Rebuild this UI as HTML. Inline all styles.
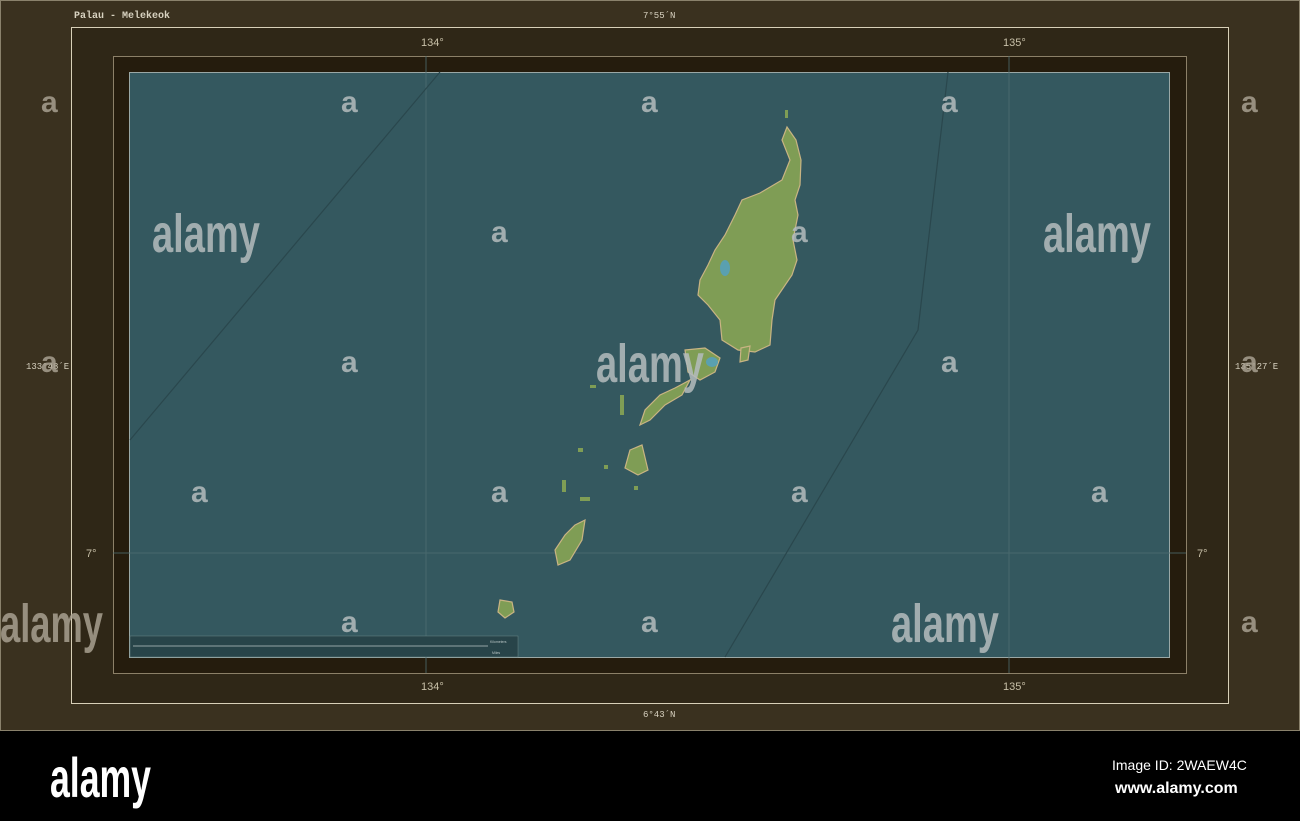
<!DOCTYPE html>
<html><head><meta charset="utf-8"><style>
html,body{margin:0;padding:0;background:#000;}
svg{display:block}
</style></head><body>
<svg width="1300" height="821" viewBox="0 0 1300 821" xmlns="http://www.w3.org/2000/svg">
<rect x="0" y="0" width="1300" height="821" fill="#000"/>
<rect x="0.5" y="0.5" width="1299" height="730" fill="#3a311f" stroke="#8a826c" stroke-width="1"/>
<rect x="71.5" y="27.5" width="1157" height="676" fill="#2f2717" stroke="#d8d0b8" stroke-width="1"/>
<rect x="113.5" y="56.5" width="1073" height="617" fill="#251c0d" stroke="#8c8068" stroke-width="1"/>
<rect x="129.5" y="72.5" width="1040" height="585" fill="#34585f" stroke="#9aa8a6" stroke-width="1"/>
<!-- grid -->
<g stroke="#4e6c70" stroke-width="1" opacity="0.8">
<line x1="426" y1="56" x2="426" y2="673"/>
<line x1="1009" y1="56" x2="1009" y2="673"/>
<line x1="113" y1="553" x2="1186" y2="553"/>
</g>
<g stroke="#2a474d" stroke-width="1.2" fill="none">
<path d="M130 440 L440 72"/>
<path d="M948 72 L918 330 L725 657"/>
</g>
<!-- labels -->
<g font-family="Liberation Mono, monospace" fill="#d8d2c0" font-size="9">
<text x="74" y="18" font-weight="bold" font-size="10">Palau - Melekeok</text>
<text x="643" y="18">7°55´N</text>
<text x="643" y="717">6°43´N</text>
<text x="26" y="369">133°48´E</text>
<text x="1235" y="369">135°27´E</text>
</g>
<g font-family="Liberation Sans, sans-serif" fill="#c8c0a8" font-size="11">
<text x="421" y="46">134°</text><text x="1003" y="46">135°</text>
<text x="421" y="690">134°</text><text x="1003" y="690">135°</text>
<text x="86" y="557">7°</text><text x="1197" y="557">7°</text>
</g>
<!-- scale bar -->
<rect x="130" y="636" width="388" height="21" fill="#284449" stroke="#6a8688" stroke-width="0.5"/>
<line x1="133" y1="646" x2="488" y2="646" stroke="#b8c4c4" stroke-width="0.8"/>
<g font-family="Liberation Sans,sans-serif" font-size="3.5" fill="#b8c4c4">
<text x="490" y="643">Kilometers</text><text x="492" y="654">Miles</text>
</g>
<!-- islands -->
<g fill="#7f9d55" stroke="#c9b483" stroke-width="1.2">
<path d="M787 127 L796 140 L801 160 L800 185 L795 200 L798 215 L793 240 L797 260 L792 275 L775 300 L772 320 L770 345 L755 352 L738 350 L722 340 L720 320 L708 305 L698 295 L700 280 L708 265 L715 250 L725 235 L735 215 L742 200 L760 193 L782 180 L790 160 L782 140 Z"/>
<path d="M685 350 L705 348 L720 358 L715 372 L700 380 L688 372 Z"/>
<path d="M690 380 L682 395 L665 405 L650 420 L640 425 L645 410 L660 395 L675 388 Z"/>
<path d="M630 450 L642 445 L648 470 L638 475 L625 468 Z"/>
<path d="M575 525 L585 520 L582 540 L570 560 L558 565 L555 550 L565 535 Z"/>
<path d="M500 600 L512 602 L514 612 L505 618 L498 612 Z"/>
<path d="M741 348 L750 346 L748 360 L740 362 Z"/>
</g>
<g fill="#5aa0b0"><ellipse cx="725" cy="268" rx="5" ry="8"/><ellipse cx="712" cy="362" rx="6" ry="5"/></g>
<g fill="#7f9d55">
<rect x="590" y="385" width="6" height="3"/><rect x="578" y="448" width="5" height="4"/><rect x="604" y="465" width="4" height="4"/><rect x="580" y="497" width="10" height="4"/><rect x="562" y="480" width="4" height="12"/><rect x="620" y="395" width="4" height="20"/><rect x="634" y="486" width="4" height="4"/><rect x="785" y="110" width="3" height="8"/>
</g>
<!-- watermarks -->
<g font-family="Liberation Sans Narrow, Liberation Sans, sans-serif" font-weight="bold" fill="#b4bcbe" opacity="0.85">
<text x="152" y="252" font-size="54" textLength="108" lengthAdjust="spacingAndGlyphs">alamy</text>
<text x="1043" y="252" font-size="54" textLength="108" lengthAdjust="spacingAndGlyphs">alamy</text>
<text x="596" y="382" font-size="54" textLength="108" lengthAdjust="spacingAndGlyphs">alamy</text>
<text x="891" y="642" font-size="54" textLength="108" lengthAdjust="spacingAndGlyphs">alamy</text>
<text x="0" y="642" font-size="54" textLength="103" lengthAdjust="spacingAndGlyphs" fill="#a8a090">alamy</text>
</g>
<g font-family="Liberation Sans Narrow, Liberation Sans, sans-serif" font-weight="bold" font-size="30" fill="#b4bcbe" opacity="0.85">
<text x="41" y="112" fill="#a8a090">a</text><text x="341" y="112">a</text><text x="641" y="112">a</text><text x="941" y="112">a</text><text x="1241" y="112" fill="#a8a090">a</text>
<text x="491" y="242">a</text><text x="791" y="242">a</text>
<text x="41" y="372" fill="#a8a090">a</text><text x="341" y="372">a</text><text x="941" y="372">a</text><text x="1241" y="372" fill="#a8a090">a</text>
<text x="191" y="502">a</text><text x="491" y="502">a</text><text x="791" y="502">a</text><text x="1091" y="502">a</text>
<text x="341" y="632">a</text><text x="641" y="632">a</text><text x="1241" y="632" fill="#a8a090">a</text>
</g>
<!-- footer -->
<text x="50" y="797" font-family="Liberation Sans Narrow, Liberation Sans, sans-serif" font-weight="bold" font-size="56" fill="#fff" textLength="101" lengthAdjust="spacingAndGlyphs">alamy</text>
<text x="1112" y="770" font-family="Liberation Sans, sans-serif" font-size="14" fill="#fff">Image ID: 2WAEW4C</text>
<text x="1115" y="793" font-family="Liberation Sans, sans-serif" font-weight="bold" font-size="16" fill="#fff">www.alamy.com</text>
</svg>
</body></html>
